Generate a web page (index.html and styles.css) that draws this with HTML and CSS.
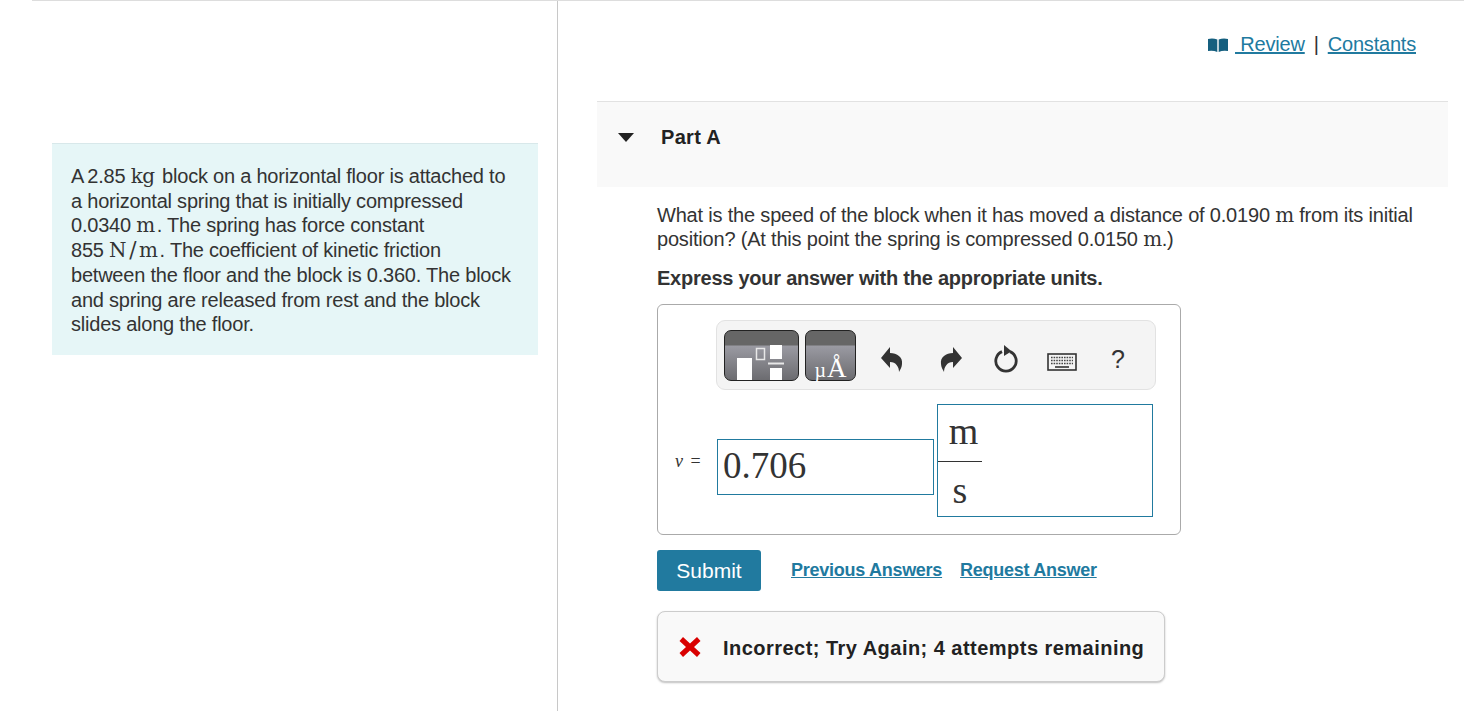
FILE: index.html
```html
<!DOCTYPE html>
<html lang="en">
<head>
    <meta charset="UTF-8">
    <meta name="viewport" content="width=device-width, initial-scale=1.0">
    <title>Part A</title>
    <link rel="stylesheet" href="styles.css">
</head>
<body>
    <div class="page">
        <div class="left-column">
            <div class="intro">
                A<span class="thin"> </span>2.85 <span class="math">kg</span> block on a horizontal floor is attached to<br>
                a horizontal spring that is initially compressed<br>
                0.0340 <span class="math">m</span>. The spring has force constant<br>
                855 <span class="math">N<span class="slash">/</span>m</span>. The coefficient of kinetic friction<br>
                between the floor and the block is 0.360. The block<br>
                and spring are released from rest and the block<br>
                slides along the floor.
            </div>
        </div>

        <div class="right-column">
            <div class="top-links">
                <svg class="book-icon" width="20" height="14" viewBox="0 0 20 14">
                    <path d="M0 1 Q5 0 9.3 1.5 V14 Q5 12 0 13 Z" fill="#155f7f"/>
                    <path d="M20 1 Q15 0 10.7 1.5 V14 Q15 12 20 13 Z" fill="#155f7f"/>
                </svg>
                <a href="#" class="review-link">&nbsp;Review</a>
                <span class="sep">|</span>
                <a href="#">Constants</a>
            </div>

            <div class="part-header">
                <span class="caret"></span>
                <span class="part-title">Part A</span>
            </div>

            <div class="part-body">
                <p class="question">What is the speed of the block when it has moved a distance of 0.0190 <span class="math">m</span> from its initial<br>
                position? (At this point the spring is compressed 0.0150 <span class="math">m</span>.)</p>
                <p class="instruction">Express your answer with the appropriate units.</p>

                <div class="answer-box">
                    <div class="toolbar">
                        <div class="tpl-btn tpl-wide">
                            <svg width="73" height="36" viewBox="0 0 73 36">
                                <rect x="12" y="14" width="15" height="22" fill="#fff"/>
                                <rect x="31.5" y="4.5" width="8" height="11" fill="none" stroke="#e8e8e8" stroke-width="1.5"/>
                                <rect x="45" y="1" width="12" height="14" fill="#fff"/>
                                <rect x="43" y="18.5" width="16" height="2" fill="#e8e8e8"/>
                                <rect x="45" y="24" width="12" height="12" fill="#fff"/>
                            </svg>
                        </div>
                        <div class="tpl-btn tpl-narrow">
                            <span class="tpl-units"><span class="tpl-mu">µ</span>Å</span>
                        </div>
                        <svg class="tool-icon undo" width="22" height="26" viewBox="0 0 22 26">
                            <path d="M0 11 L9 0 V6 C16 6 22 10 21 17 C21 20 19 23 18 25 C18 20 15 15 9 15 V21 Z" fill="#333"/>
                        </svg>
                        <svg class="tool-icon redo" width="22" height="26" viewBox="0 0 22 26">
                            <path d="M22 11 L13 0 V6 C6 6 0 10 1 17 C1 20 3 23 4 25 C4 20 7 15 13 15 V21 Z" fill="#333"/>
                        </svg>
                        <svg class="tool-icon reset" width="26" height="28" viewBox="0 0 26 28">
                            <path d="M9 6.6 A10.2 10.2 0 1 0 17 6.6" fill="none" stroke="#333" stroke-width="2.8"/>
                            <path d="M11 0 L18.5 6.2 L11 11 Z" fill="#333"/>
                        </svg>
                        <svg class="tool-icon keyboard" width="30" height="18" viewBox="0 0 30 18">
                            <rect x="1" y="1" width="28" height="16" fill="#f4f4f4" stroke="#333" stroke-width="1.6"/>
                            <path d="M4 4.5 H26 M4 7.5 H26 M4 10.5 H26" stroke="#444" stroke-width="1.5" stroke-dasharray="1.6 1"/>
                            <path d="M8 14 H22" stroke="#333" stroke-width="1.6"/>
                        </svg>
                        <span class="help">?</span>
                    </div>

                    <div class="answer-row">
                        <span class="var-label"><i>v</i> =</span>
                        <div class="value-input">0.706</div>
                        <div class="unit-input">
                            <div class="fraction">
                                <span class="numer">m</span>
                                <span class="denom">s</span>
                            </div>
                        </div>
                    </div>
                </div>

                <div class="actions">
                    <button class="submit-button" type="button">Submit</button>
                    <a href="#" class="action-link">Previous Answers</a>
                    <a href="#" class="action-link">Request Answer</a>
                </div>

                <div class="feedback">
                    <svg width="22" height="22" viewBox="0 0 22 22">
                        <path d="M4 1 L11 7.5 L18 1 L21.5 5 L15 11 L21.5 17 L18 21 L11 14.5 L4 21 L.5 17 L7 11 L.5 5 Z" fill="#d90000"/>
                    </svg>
                    <span class="feedback-text">Incorrect; Try Again; 4 attempts remaining</span>
                </div>
            </div>
        </div>
    </div>
</body>
</html>
```

FILE: styles.css
```css
html, body {
    margin: 0;
    padding: 0;
    height: 100%;
    overflow: hidden;
}

body {
    background-color: #fff;
    color: #333;
    font-family: "Liberation Sans", Arial, sans-serif;
    font-size: 20px;
}

a {
    color: #217a9f;
}

.page {
    display: flex;
    height: 710px;
    margin-left: 32px;
    border-top: 1px solid #ddd;
}

.left-column {
    width: 526px;
    flex-shrink: 0;
    border-right: 1px solid #c8c8c8;
    padding: 142px 19px 0 20px;
    box-sizing: border-box;
}

.intro {
    background-color: #e6f6f7;
    border-top: 1px solid #d8e8ea;
    padding: 20px 19px 18px;
    line-height: 24.7px;
    letter-spacing: -0.22px;
    height: 212px;
    box-sizing: border-box;
}

.math {
    font-family: "DejaVu Serif", "Liberation Serif", serif;
    font-size: 20px;
    line-height: 0;
    letter-spacing: -0.4px;
}

.intro .math {
    margin-right: 2px;
}

.slash {
    font-size: 21.5px;
    margin: 0 3px;
}

.thin {
    font-size: 12px;
    line-height: 0;
}

.right-column {
    flex-grow: 1;
    padding: 0 16px 0 39px;
}

.top-links {
    display: flex;
    justify-content: flex-end;
    align-items: center;
    height: 23px;
    margin: 32px 32px 0 0;
    letter-spacing: -0.2px;
}

.book-icon {
    margin-right: 7px;
}

.sep {
    margin: 0 9px;
}

.part-header {
    display: flex;
    align-items: center;
    height: 68px;
    margin-top: 45px;
    background-color: #f9f9f9;
    border-top: 1px solid #e2e2e2;
    padding-bottom: 17px;
}

.caret {
    width: 0;
    height: 0;
    margin: 2px 0 0 21px;
    border-left: 8px solid transparent;
    border-right: 8px solid transparent;
    border-top: 9px solid #222;
}

.part-title {
    margin: 3px 0 0 27px;
    font-weight: bold;
    color: #222;
    letter-spacing: 0.3px;
}

.part-body {
    padding-left: 60px;
}

.question {
    margin: 16px 0 0;
    line-height: 24px;
    letter-spacing: -0.19px;
}

.instruction {
    margin: 15px 0 0;
    font-weight: bold;
    line-height: 24px;
    letter-spacing: -0.24px;
}

.answer-box {
    width: 524px;
    height: 231px;
    box-sizing: border-box;
    margin-top: 14px;
    padding-top: 15px;
    border: 1px solid #aaa;
    border-radius: 6px;
}

.toolbar {
    display: flex;
    align-items: center;
    width: 440px;
    height: 70px;
    box-sizing: border-box;
    margin-left: 58px;
    padding: 0 7px 0 7px;
    background-color: #f4f4f4;
    border: 1px solid #e2e2e2;
    border-radius: 9px;
}

.tpl-btn {
    display: flex;
    justify-content: center;
    align-items: flex-end;
    box-sizing: border-box;
    height: 51px;
    border: 1px solid #222;
    border-radius: 7px;
    background: linear-gradient(#666 0, #666 14px, #9a9aa2 15px, #6c6c70 100%);
}

.tpl-wide {
    width: 75px;
}

.tpl-narrow {
    width: 51px;
    margin-left: 6px;
}

.tpl-units {
    color: #fff;
    font-family: "Liberation Serif", serif;
    font-size: 27px;
    line-height: 24px;
    margin-bottom: -2px;
}

.tpl-mu {
    font-size: 20px;
    margin-right: 1px;
}

.tool-icon {
    flex-shrink: 0;
}

.undo {
    margin: 9px 0 0 25px;
}

.redo {
    margin: 9px 0 0 37px;
}

.reset {
    margin: 8px 0 0 31px;
}

.keyboard {
    margin: 14px 0 0 28px;
}

.help {
    margin: 8px 0 0 34px;
    font-size: 25px;
}

.answer-row {
    display: flex;
    align-items: center;
    margin-top: 14px;
}

.var-label {
    width: 59px;
    box-sizing: border-box;
    padding-left: 17px;
    font-family: "Liberation Serif", serif;
    font-size: 18px;
    letter-spacing: 1.5px;
    margin-top: 1px;
}

.value-input {
    width: 217px;
    height: 56px;
    box-sizing: border-box;
    margin-top: 13px;
    padding-left: 5px;
    border: 1px solid #217a9f;
    font-family: "Liberation Serif", serif;
    font-size: 37px;
    line-height: 52px;
}

.unit-input {
    width: 216px;
    height: 113px;
    box-sizing: border-box;
    margin-left: 3px;
    border: 1px solid #217a9f;
    font-family: "Liberation Serif", serif;
    font-size: 38px;
}

.fraction {
    display: flex;
    flex-direction: column;
    width: 44px;
    text-align: center;
}

.numer {
    height: 56px;
    padding-left: 7px;
    line-height: 52px;
    border-bottom: 1px solid #333;
}

.denom {
    line-height: 56px;
}

.actions {
    display: flex;
    align-items: center;
    margin-top: 15px;
}

.submit-button {
    width: 104px;
    height: 41px;
    padding: 0;
    background-color: #217a9f;
    color: #fff;
    border: none;
    border-radius: 3px;
    font-family: "Liberation Sans", Arial, sans-serif;
    font-size: 21px;
}

.action-link {
    margin-left: 18px;
    font-size: 18px;
    font-weight: bold;
    letter-spacing: -0.27px;
}

.submit-button + .action-link {
    margin-left: 30px;
}

.feedback {
    display: flex;
    align-items: center;
    width: 508px;
    height: 71px;
    box-sizing: border-box;
    margin-top: 20px;
    padding-left: 21px;
    background-color: #f9f9f9;
    border: 1px solid #ccc;
    border-radius: 8px;
    box-shadow: 0 1px 2px rgba(0, 0, 0, 0.25);
}

.feedback-text {
    margin: 3px 0 0 22px;
    font-weight: bold;
    color: #222;
    letter-spacing: 0.47px;
}
```
